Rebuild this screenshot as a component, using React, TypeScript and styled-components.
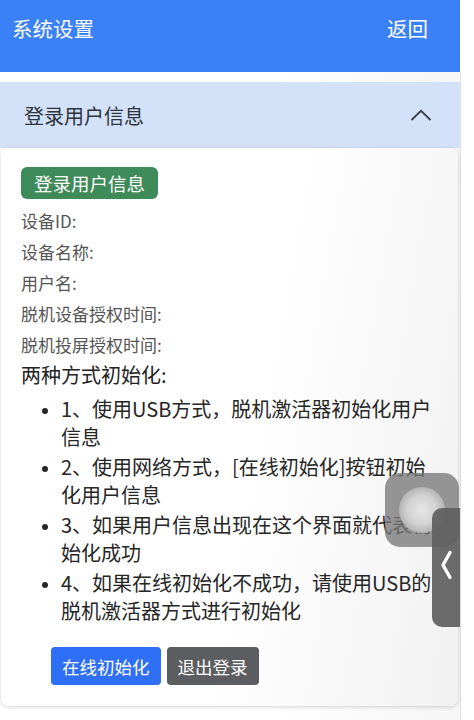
import React from 'react';
import styled, { createGlobalStyle } from 'styled-components';

const GlobalStyle = createGlobalStyle`
  html, body {
    margin: 0;
    padding: 0;
    background: #fff;
  }
  body {
    font-family: "Noto Sans CJK SC", "Noto Sans", "Liberation Sans", sans-serif;
  }
  * { box-sizing: border-box; }
`;

const fields = ['设备ID:', '设备名称:', '用户名:', '脱机设备授权时间:', '脱机投屏授权时间:'];

const steps = [
  '1、使用USB方式，脱机激活器初始化用户信息',
  '2、使用网络方式，[在线初始化]按钮初始化用户信息',
  '3、如果用户信息出现在这个界面就代表初始化成功',
  '4、如果在线初始化不成功，请使用USB的脱机激活器方式进行初始化',
];

const App: React.FC = () => {
  return (
    <Page>
      <GlobalStyle />
      <Header>
        <HeaderTitle>系统设置</HeaderTitle>
        <HeaderBack>返回</HeaderBack>
      </Header>
      <Body>
        <AccordionHead>
          <AccordionTitle>登录用户信息</AccordionTitle>
          <svg width="22" height="12" viewBox="0 0 22 12" fill="none">
            <path d="M1.5 11L11 1.8L20.5 11" stroke="#3a3f47" strokeWidth="1.8" />
          </svg>
        </AccordionHead>
        <Card>
          <Badge>登录用户信息</Badge>
          <FieldList>
            {fields.map((f) => (
              <Field key={f}>{f}</Field>
            ))}
          </FieldList>
          <Intro>两种方式初始化:</Intro>
          <Steps>
            {steps.map((s) => (
              <Step key={s}>{s}</Step>
            ))}
          </Steps>
          <Actions>
            <Button $variant="primary">在线初始化</Button>
            <Button $variant="secondary">退出登录</Button>
          </Actions>
        </Card>
      </Body>
      <AssistiveTouch>
        <TouchDot />
      </AssistiveTouch>
      <SideTab>
        <svg width="14" height="30" viewBox="0 0 14 30" fill="none">
          <path d="M11 2.5L4 15L11 27.5" stroke="#fff" strokeWidth="3.4" strokeLinecap="round" strokeLinejoin="round" />
        </svg>
      </SideTab>
    </Page>
  );
};

const Page = styled.div`
  position: relative;
  width: 474px;
  min-height: 720px;
  background: #fff;
  overflow: hidden;
`;

const Header = styled.header`
  width: 460px;
  height: 72px;
  background: #3a80f6;
  display: flex;
  justify-content: space-between;
  align-items: flex-start;
  padding: 14px 32px 0 12px;
  color: #fff;
`;

const HeaderTitle = styled.div`
  font-size: 20.5px;
  line-height: 28px;
`;

const HeaderBack = styled.div`
  font-size: 20.5px;
  line-height: 28px;
`;

const Body = styled.main`
  width: 461px;
  min-height: 648px;
  padding-top: 10px;
  border-right: 1px solid #e2e2e2;
  background: linear-gradient(90deg, #fff 60%, #f6f6f6 100%);
`;

const AccordionHead = styled.div`
  height: 66px;
  background: #d3e1f9;
  display: flex;
  align-items: center;
  justify-content: space-between;
  padding: 0 28px 0 24px;
`;

const AccordionTitle = styled.div`
  font-size: 20px;
  color: #2e343c;
`;

const Card = styled.section`
  margin: 0 2px 0 1px;
  padding: 19px 20px 21px;
  background: linear-gradient(100deg, #fff 55%, #f1f1f1 100%);
  border-radius: 8px;
  box-shadow: 0 1px 4px rgba(0, 0, 0, 0.18);
`;

const Badge = styled.div`
  display: inline-block;
  background: #3f8a59;
  color: #fff;
  font-size: 18.5px;
  line-height: 32px;
  padding: 0 13px;
  border-radius: 6px;
`;

const FieldList = styled.div`
  margin-top: 6px;
  display: flex;
  flex-direction: column;
`;

const Field = styled.div`
  font-size: 17px;
  line-height: 31px;
  color: #555;
`;

const Intro = styled.div`
  font-size: 20px;
  line-height: 28px;
  color: #222;
  margin-top: 1px;
`;

const Steps = styled.ul`
  margin: 6px 0 0;
  padding: 0 0 0 40px;
  font-size: 20px;
  line-height: 28px;
  color: #262626;
  li::marker {
    font-size: 16px;
  }
`;

const Step = styled.li`
  margin-bottom: 2px;
`;

const Actions = styled.div`
  display: flex;
  gap: 6px;
  margin: 22px 0 0 30px;
`;

const Button = styled.button<{ $variant: 'primary' | 'secondary' }>`
  font-family: inherit;
  font-size: 17.5px;
  height: 38px;
  padding: 0 11px;
  border: none;
  border-radius: 4px;
  color: #fff;
  background: ${(p) => (p.$variant === 'primary' ? '#2f6ff5' : '#5b5d61')};
`;

const AssistiveTouch = styled.div`
  position: absolute;
  left: 385px;
  top: 473px;
  width: 74px;
  height: 74px;
  border-radius: 15px;
  background: rgba(120, 120, 120, 0.78);
  display: flex;
  align-items: center;
  justify-content: center;
`;

const TouchDot = styled.div`
  width: 46px;
  height: 46px;
  border-radius: 50%;
  background: radial-gradient(circle, #e6e6e6 0%, #d2d2d2 45%, #a9a9a9 80%, #8f8f8f 100%);
`;

const SideTab = styled.div`
  position: absolute;
  left: 432px;
  top: 508px;
  width: 28px;
  height: 119px;
  background: rgba(95, 95, 95, 0.92);
  border-radius: 10px 0 0 10px;
  display: flex;
  align-items: center;
  justify-content: center;
  padding-bottom: 6px;
`;

export default App;
